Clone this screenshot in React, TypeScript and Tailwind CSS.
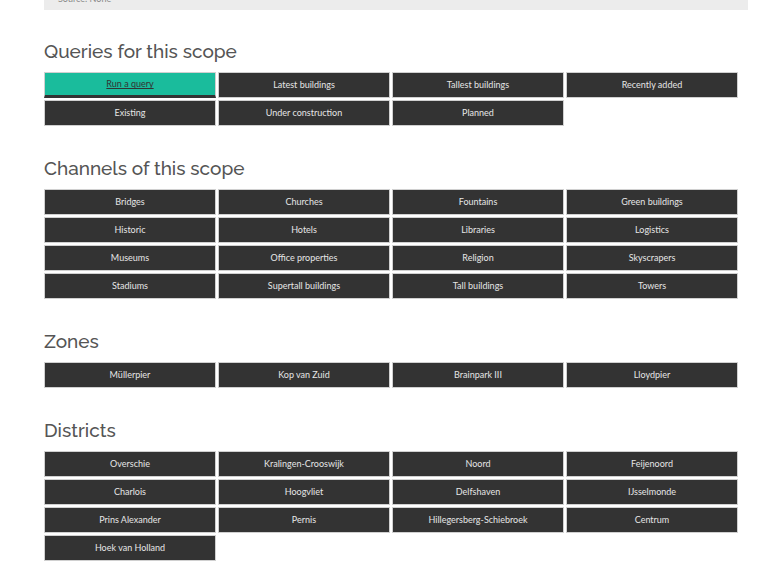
import React from "react";

const queries = ["Run a query", "Latest buildings", "Tallest buildings", "Recently added", "Existing", "Under construction", "Planned"];
const channels = [
  "Bridges", "Churches", "Fountains", "Green buildings",
  "Historic", "Hotels", "Libraries", "Logistics",
  "Museums", "Office properties", "Religion", "Skyscrapers",
  "Stadiums", "Supertall buildings", "Tall buildings", "Towers",
];
const zones = ["Müllerpier", "Kop van Zuid", "Brainpark III", "Lloydpier"];
const districts = [
  "Overschie", "Kralingen-Crooswijk", "Noord", "Feijenoord",
  "Charlois", "Hoogvliet", "Delfshaven", "IJsselmonde",
  "Prins Alexander", "Pernis", "Hillegersberg-Schiebroek", "Centrum",
  "Hoek van Holland",
];

function Section({ title, items, active }: { title: string; items: string[]; active?: string }) {
  return (
    <section className="mt-[30px]">
      <h2 className="text-[19px] leading-[24px] mb-[9px] text-[#555] font-medium" style={{ fontFamily: "Raleway, 'Open Sans', sans-serif" }}>
        {title}
      </h2>
      <div className="grid grid-cols-4 gap-[2px] w-[694px]">
        {items.map((item) => {
          const on = item === active;
          return (
            <a
              key={item}
              href="#"
              className={
                on
                  ? "h-[26px] flex items-center justify-center border border-[#d0d0d0] border-b-[3px] border-b-[#333] bg-[#1abc9c] text-[#333] underline text-[9px]"
                  : "h-[26px] flex items-center justify-center border border-[#d0d0d0] bg-[#333] text-[#e6e6e6] text-[9px]"
              }
            >
              {item}
            </a>
          );
        })}
      </div>
    </section>
  );
}

export default function App() {
  return (
    <div className="min-h-screen bg-white" style={{ fontFamily: "Lato, 'Liberation Sans', sans-serif" }}>
      <div className="ml-[44px] w-[704px] pb-10">
        <div className="h-[10px] bg-[#ececec] overflow-hidden relative">
          <span className="absolute left-[14px] top-[-8px] text-[9px] text-[#888]">Source: None</span>
        </div>
        <div className="-mt-[1px]">
          <Section title="Queries for this scope" items={queries} active="Run a query" />
        </div>
        <Section title="Channels of this scope" items={channels} />
        <Section title="Zones" items={zones} />
        <div className="mt-[1px]">
          <Section title="Districts" items={districts} />
        </div>
      </div>
    </div>
  );
}
